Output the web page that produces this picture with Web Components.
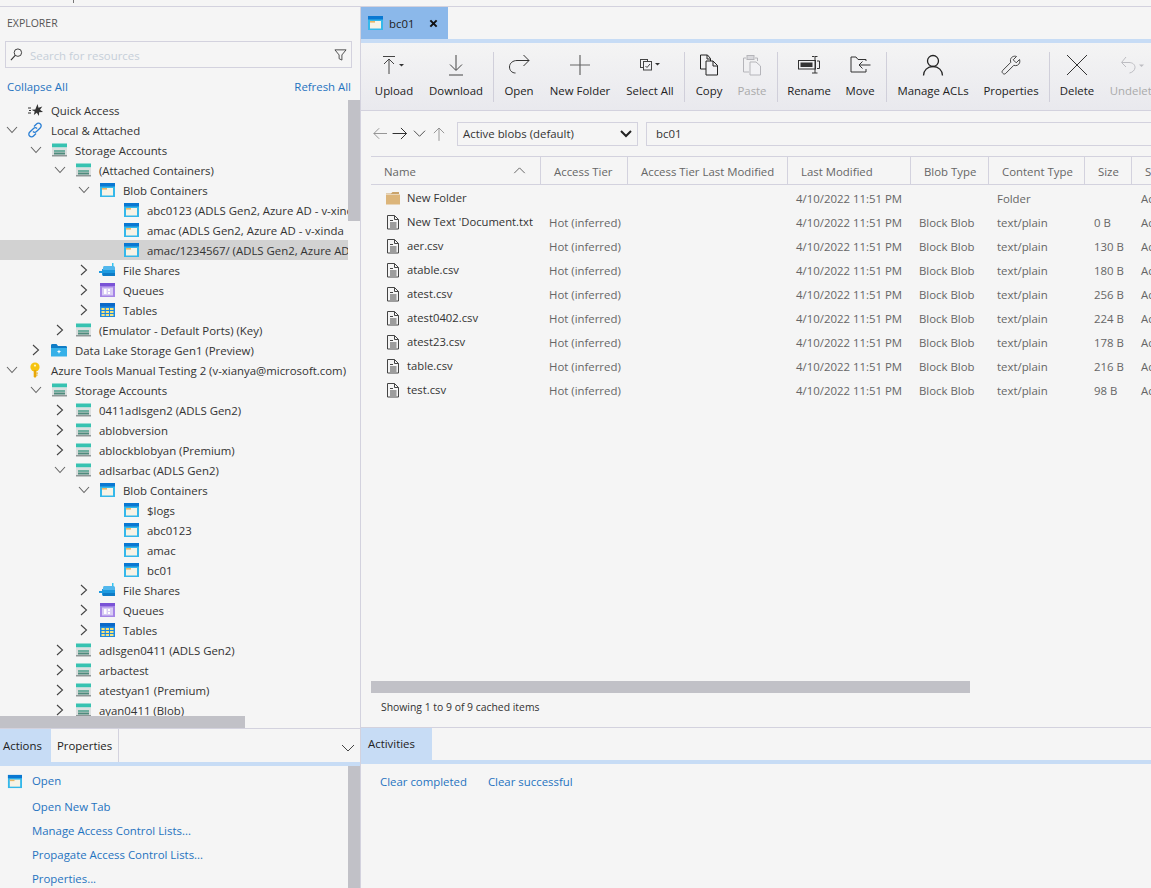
<!DOCTYPE html>
<html>
<head>
<meta charset="utf-8">
<title>Storage Explorer</title>
<style>
  html, body { margin: 0; height: 100%; overflow: hidden; background: #f5f5f5; }
  body { font: 11.4px/16px "Open Sans", "Noto Sans", sans-serif; color: #333; --link: #1f73c0; --line: #d3d2de; --stripe: #c7dcf5; --thumb: #c1c1c7; }
</style>
</head>
<body>
<sx-app></sx-app>
<script>
const ICONS = {
  quick: '<svg viewBox="0 0 16 16"><path d="M1 6h3M2 8.500h2M1 11h3" stroke="#333" fill="none"/><path d="M10.500 2l1 3.800 3.800-1.300-2.300 3.300 3 2.200-3.900.2-.1 3.800-2.200-3.200-3 2.200.9-3.600L4.500 7.700l3.800-.2z" fill="#333"/></svg>',
  link: '<svg viewBox="0 0 16 16" fill="none" stroke="#2a7fd4" stroke-width="1.3"><path d="M7 4.500l2.500-2.500a2.600 2.600 0 0 1 3.900 0 2.600 2.600 0 0 1 0 3.700L9.500 9.500a2.600 2.600 0 0 1-3.600 0"/><path d="M9 11.500L6.500 14a2.600 2.600 0 0 1-3.900 0 2.600 2.600 0 0 1 0-3.700L6.500 6.500a2.600 2.600 0 0 1 3.600 0"/></svg>',
  storage: '<svg viewBox="0 0 16 16"><rect x="1" y="1.500" width="15" height="4" fill="#37c2b1"/><rect x="1" y="5.500" width="15" height="8.500" fill="#dcdfdf"/><rect x="3" y="8" width="11" height="2" fill="#6fae9f"/><rect x="3" y="10.500" width="11" height="2" fill="#4e8a7c"/><rect x="1" y="13" width="15" height="1.500" fill="#8f9797"/></svg>',
  blob: '<svg viewBox="0 0 16 16"><rect x="1" y="1" width="15" height="14" fill="#35b8ea"/><rect x="1" y="1" width="15" height="3.500" fill="#0a78d2"/><rect x="3" y="6" width="11" height="7.500" fill="#f7f3e6"/><rect x="3" y="6" width="5" height="1.600" fill="#e9b765"/></svg>',
  files: '<svg viewBox="0 0 16 16"><path d="M0 9h3V7h13v6.500H3V11H0z" fill="#1d9ae0"/><path d="M4 5.500C4 4 5 4 6 4h8c1.200 0 2 .6 2 1.600V8H4z" fill="#52b7ec"/><path d="M13 1h1.500v3H13z" fill="#35c6f0"/><path d="M4 11h12v3H4z" fill="#0f7cc6"/></svg>',
  queue: '<svg viewBox="0 0 16 16"><rect x="1" y="1" width="15" height="14" fill="#a585e6"/><rect x="1" y="1" width="15" height="3" fill="#7a53d6"/><rect x="3" y="5.500" width="11" height="8" fill="#d8ccf4"/><path d="M5 7h2.500v5H5zM9 7h2v2H9zM9 10h2v2H9z" fill="#fff"/></svg>',
  table: '<svg viewBox="0 0 16 16"><rect x="1" y="1" width="15" height="14" fill="#1d8ae0"/><rect x="1" y="1" width="15" height="3.500" fill="#0a68c8"/><path d="M2.500 6h3.200v2H2.500zM6.800 6h3.200v2H6.800zM11 6h3.500v2H11zM2.500 9h3.200v2H2.500zM6.800 9h3.200v2H6.800zM11 9h3.500v2H11zM2.500 12h3.200v2H2.500zM6.800 12h3.200v2H6.800zM11 12h3.500v2H11z" fill="#f6e27a"/></svg>',
  lake: '<svg viewBox="0 0 16 16"><path d="M0 3.500C0 2.500.5 2 1.500 2h4L7 4h7.500c1 0 1.500.5 1.500 1.500V14H0z" fill="#0f7cc6"/><path d="M0 6h16v8.500H0z" fill="#35b0e8"/><path d="M8 7.500l.6 1.600 1.600.6-1.600.6L8 12l-.6-1.700-1.600-.6 1.600-.6z" fill="#fff"/></svg>',
  key: '<svg viewBox="0 0 16 16"><circle cx="8" cy="5" r="4.600" fill="#f6c40f"/><circle cx="8" cy="3.600" r="1.100" fill="#fff5c2"/><path d="M6.700 8h2.600v6.500L8 16l-1.300-1.500z" fill="#e8a80a"/><path d="M9.300 10.500h1.500v1.200H9.300zM9.300 12.600h1.200v1.100H9.300z" fill="#e8a80a"/></svg>',
  folder: '<svg viewBox="0 0 16 16"><path d="M1 3.500h5L7.500 2H14v2H1z" fill="#c9a36a"/><path d="M1 4.500h14v10H1z" fill="#dcb57a"/></svg>',
  doc: '<svg viewBox="0 0 16 16" fill="none" stroke="#444"><path d="M2.500 1.500h7l4 4v9.500h-11z"/><path d="M9.500 1.500v4h4M5 6.500h3M5 9h6.500M5 11h6.500M5 13h6.500"/></svg>',
  search: '<svg viewBox="0 0 14 14" fill="none" stroke="#333"><circle cx="8.500" cy="5" r="4"/><path d="M5.600 8L1 13" stroke-width="1.200"/></svg>',
  funnel: '<svg viewBox="0 0 14 14" fill="none" stroke="#444"><path d="M1 2h12L8.500 7.500V13l-3-1.500v-4z"/></svg>',
  upload: '<svg viewBox="0 0 22 18" fill="none" stroke="#444"><path d="M0 .5h12M6 3v15M1 8l5-5 5 5"/><path d="M16 8h5l-2.500 2.500z" fill="#333" stroke="none"/></svg>',
  download: '<svg viewBox="0 0 18 22" fill="none" stroke="#444"><path d="M9 1v15M3 10.500l6 6 6-6M2 21h14"/></svg>',
  open: '<svg viewBox="0 0 22 22" fill="none" stroke="#333"><path d="M21 6.500H9C5 6.500 1.500 9 1.500 13c0 3.500 2.500 6 6 6"/><path d="M15.500 1l5.500 5.500-5.500 5.500"/></svg>',
  plus: '<svg viewBox="0 0 22 22" fill="none" stroke="#666" stroke-width="1.200"><path d="M11 1v20M1 11h20"/></svg>',
  selectall: '<svg viewBox="0 0 22 14" fill="none" stroke="#444"><rect x="1.500" y="1.500" width="7" height="8"/><rect x="4.500" y="3.500" width="8" height="8.500" fill="#f0f0f3"/><path d="M6.500 8l1.500 1.500 3-3.500"/><path d="M16 5h5l-2.500 2.500z" fill="#333" stroke="none"/></svg>',
  copy: '<svg viewBox="0 0 20 22" fill="none" stroke="#222"><path d="M1.500 1h7l3 3.500V15h-10z"/><path d="M8 1v4h3.500"/><path d="M7 7h7l4.500 4.500V21H7z" fill="#f2f2f5"/><path d="M14 7v5h4.500"/></svg>',
  paste: '<svg viewBox="0 0 20 22" fill="none" stroke="#b5b5ba"><path d="M4 4H1.500v14H7M13 4h2.500v3"/><rect x="5" y="1.500" width="7" height="4" fill="#d9d9dd"/><path d="M8 8h6l4.500 4V21H8z" fill="#f2f2f5"/></svg>',
  rename: '<svg viewBox="0 0 22 18" fill="none" stroke="#333"><rect x=".5" y="4.500" width="17" height="8.500"/><rect x="2.500" y="6.500" width="12" height="4.500" fill="#333" stroke="none"/><path d="M14 .5h2.500M19.500 .5H17v16.500h2.500M14 17h3"/><path d="M19 5h2.500v7.500H19"/></svg>',
  move: '<svg viewBox="0 0 21 18" fill="none" stroke="#333"><path d="M16 5V3.500H8L6 1H1v15h15v-3"/><path d="M20.500 9H9M12.500 5.500L9 9l3.500 3.500"/></svg>',
  person: '<svg viewBox="0 0 22 22" fill="none" stroke="#222" stroke-width="1.300"><circle cx="11" cy="7" r="5.500"/><path d="M1.500 21.500c0-5 4-9 9.500-9s9.500 4 9.500 9"/></svg>',
  wrench: '<svg viewBox="0 0 20 20" fill="none" stroke="#444"><path d="M18.500 4.500l-3.300 3.300-3-3L15.500 1.500c-2.500-1-5.500.5-6 3-.2 1 0 2 .3 2.800L1.800 15.300c-1 1-1 2 0 3s2 1 3 0l8-8c2.500 1 5-.2 5.800-2.500.3-1 .3-2 0-3.300z"/></svg>',
  del: '<svg viewBox="0 0 22 22" fill="none" stroke="#333"><path d="M1 1l20 20M21 1L1 21"/></svg>',
  undo: '<svg viewBox="0 0 28 18" fill="none" stroke="#bdbdc2"><path d="M2 6.500h7c3.500 0 6 2 6 5 0 2.500-2.500 5-5.500 5.500"/><path d="M6 1L1.500 6.500 6 11"/><path d="M19 8.500h5L21.500 11z" fill="#bdbdc2" stroke="none"/></svg>',
  back: '<svg viewBox="0 0 16 14" fill="none" stroke="#888"><path d="M16 7H1M7 1L1 7l6 6"/></svg>',
  fwd: '<svg viewBox="0 0 16 14" fill="none" stroke="#222"><path d="M0 7h15M9 1l6 6-6 6"/></svg>',
  drop: '<svg viewBox="0 0 14 14" fill="none" stroke="#444"><path d="M1 4l6 6 6-6"/></svg>',
  up: '<svg viewBox="0 0 14 16" fill="none" stroke="#888"><path d="M7 16V1M1 7l6-6 6 6"/></svg>',
  sortup: '<svg viewBox="0 0 14 8" fill="none" stroke="#555"><path d="M1 7l6-6 6 6"/></svg>',
  closed: '<svg viewBox="0 0 8 12" fill="none" stroke="#444" stroke-width="1.100"><path d="M1 1l5.500 5L1 11"/></svg>',
  opened: '<svg viewBox="0 0 12 8" fill="none" stroke="#666" stroke-width="1.100"><path d="M1 1l5 5.500L11 1"/></svg>',
  close: '<svg viewBox="0 0 10 10" fill="none" stroke="#111" stroke-width="2.200"><path d="M1.500 1.500l7 7M8.500 1.500l-7 7"/></svg>'
};

class SxIcon extends HTMLElement {
  connectedCallback() {
    const w = this.getAttribute('w') || 16, h = this.getAttribute('h') || w;
    this.attachShadow({ mode: 'open' }).innerHTML = `
      <style>
        :host { display: inline-flex; flex: none; width: ${w}px; height: ${h}px; }
        svg { width: 100%; height: 100%; display: block; }
      </style>${ICONS[this.getAttribute('name')] || ''}`;
  }
}
customElements.define('sx-icon', SxIcon);

class SxTreeRow extends HTMLElement {
  connectedCallback() {
    const level = +this.getAttribute('level') || 0;
    const state = this.getAttribute('state');
    const chev = state === 'open' ? '<sx-icon name="opened" w="12" h="8"></sx-icon>'
      : state === 'closed' ? '<sx-icon name="closed" w="8" h="12"></sx-icon>' : '';
    this.attachShadow({ mode: 'open' }).innerHTML = `
      <style>
        :host { display: flex; align-items: center; height: 20px; padding-left: ${level * 24}px; white-space: nowrap; color: #333; }
        :host([selected]) { background: #d2d2d2; }
        .chev { width: 24px; display: flex; justify-content: center; flex: none; }
        .ico { width: 27px; flex: none; padding-left: 3px; box-sizing: border-box; display: flex; }
        .t { padding-top: 2px; }
      </style>
      <span class="chev">${chev}</span>
      <span class="ico"><sx-icon name="${this.getAttribute('icon')}"></sx-icon></span>
      <span class="t"><slot></slot></span>`;
  }
}
customElements.define('sx-tree-row', SxTreeRow);

class SxExplorer extends HTMLElement {
  connectedCallback() {
    const rows = [
      [0, '', 'quick', 'Quick Access'],
      [0, 'open', 'link', 'Local &amp; Attached'],
      [1, 'open', 'storage', 'Storage Accounts'],
      [2, 'open', 'storage', '(Attached Containers)'],
      [3, 'open', 'blob', 'Blob Containers'],
      [4, '', 'blob', 'abc0123 (ADLS Gen2, Azure AD - v-xinda'],
      [4, '', 'blob', 'amac (ADLS Gen2, Azure AD - v-xinda'],
      [4, '', 'blob', 'amac/1234567/ (ADLS Gen2, Azure AD', 1],
      [3, 'closed', 'files', 'File Shares'],
      [3, 'closed', 'queue', 'Queues'],
      [3, 'closed', 'table', 'Tables'],
      [2, 'closed', 'storage', '(Emulator - Default Ports) (Key)'],
      [1, 'closed', 'lake', 'Data Lake Storage Gen1 (Preview)'],
      [0, 'open', 'key', 'Azure Tools Manual Testing 2 (v-xianya@microsoft.com)'],
      [1, 'open', 'storage', 'Storage Accounts'],
      [2, 'closed', 'storage', '0411adlsgen2 (ADLS Gen2)'],
      [2, 'closed', 'storage', 'ablobversion'],
      [2, 'closed', 'storage', 'ablockblobyan (Premium)'],
      [2, 'open', 'storage', 'adlsarbac (ADLS Gen2)'],
      [3, 'open', 'blob', 'Blob Containers'],
      [4, '', 'blob', '$logs'],
      [4, '', 'blob', 'abc0123'],
      [4, '', 'blob', 'amac'],
      [4, '', 'blob', 'bc01'],
      [3, 'closed', 'files', 'File Shares'],
      [3, 'closed', 'queue', 'Queues'],
      [3, 'closed', 'table', 'Tables'],
      [2, 'closed', 'storage', 'adlsgen0411 (ADLS Gen2)'],
      [2, 'closed', 'storage', 'arbactest'],
      [2, 'closed', 'storage', 'atestyan1 (Premium)'],
      [2, 'closed', 'storage', 'ayan0411 (Blob)']
    ];
    this.attachShadow({ mode: 'open' }).innerHTML = `
      <style>
        :host { display: flex; flex-direction: column; height: 100%; }
        .title { height: 34px; box-sizing: border-box; padding: 8px 0 0 7px; font-size: 10.5px; color: #555; }
        .search { height: 27px; margin: 0 8px 0 5px; box-sizing: border-box; border: 1px solid var(--line); display: flex; align-items: center; padding: 0 4px; }
        .search span { flex: 1; color: #c6cfd9; padding: 2px 0 0 7px; }
        .links { height: 32px; box-sizing: border-box; padding: 11px 9px 0 7px; display: flex; justify-content: space-between; color: var(--link); }
        .tree { flex: 1; min-height: 0; position: relative; overflow: hidden; }
        .rows { width: 348px; overflow: hidden; height: 616px; }
        .vthumb { position: absolute; right: 0; top: 0; width: 12px; height: 121px; background: var(--thumb); }
        .hthumb { position: absolute; left: 0; bottom: 0; width: 245px; height: 12px; background: var(--thumb); }
      </style>
      <div class="title">EXPLORER</div>
      <div class="search"><sx-icon name="search" w="13" h="13"></sx-icon><span>Search for resources</span><sx-icon name="funnel" w="13" h="13"></sx-icon></div>
      <div class="links"><span>Collapse All</span><span>Refresh All</span></div>
      <div class="tree">
        <div class="rows">${rows.map(r => `<sx-tree-row level="${r[0]}" state="${r[1]}" icon="${r[2]}"${r[4] ? ' selected' : ''}>${r[3]}</sx-tree-row>`).join('')}</div>
        <div class="vthumb"></div>
        <div class="hthumb"></div>
      </div>`;
  }
}
customElements.define('sx-explorer', SxExplorer);

class SxPanelTabs extends HTMLElement {
  connectedCallback() {
    this.attachShadow({ mode: 'open' }).innerHTML = `
      <style>
        :host { display: block; border-top: 1px solid var(--line); border-bottom: 4px solid var(--stripe); height: var(--tabs-h, 33px); position: relative; }
        .tabs { display: flex; height: 100%; }
        ::slotted(*) { display: flex; align-items: center; box-sizing: border-box; color: #222; }
        ::slotted([active]) { background: var(--stripe); }
        ::slotted(.plain) { border-right: 1px solid var(--line); }
        .end { margin-left: auto; padding: 12px 5px 0 0; }
      </style>
      <div class="tabs"><slot></slot><div class="end"><slot name="end"></slot></div></div>`;
  }
}
customElements.define('sx-panel-tabs', SxPanelTabs);

class SxActions extends HTMLElement {
  connectedCallback() {
    const items = ['Open New Tab', 'Manage Access Control Lists...', 'Propagate Access Control Lists...', 'Properties...'];
    this.attachShadow({ mode: 'open' }).innerHTML = `
      <style>
        :host { display: block; height: 122px; overflow: hidden; position: relative; color: var(--link); padding-top: 3px; box-sizing: border-box; }
        .row { height: 24px; display: flex; align-items: center; padding-left: 32px; }
        .first { padding-left: 7px; margin-bottom: 2px; gap: 10px; }
        .thumb { position: absolute; right: 0; top: 0; bottom: 0; width: 12px; background: var(--thumb); }
      </style>
      <div class="row first"><sx-icon name="blob" w="15" h="15"></sx-icon><span>Open</span></div>
      ${items.map(t => `<div class="row">${t}</div>`).join('')}
      <div class="thumb"></div>`;
  }
}
customElements.define('sx-actions', SxActions);

class SxToolButton extends HTMLElement {
  connectedCallback() {
    const w = this.getAttribute('w');
    this.attachShadow({ mode: 'open' }).innerHTML = `
      <style>
        :host { display: flex; flex-direction: column; align-items: center; flex: none; width: ${w}px; color: #222; }
        :host([disabled]) { color: #aaa; }
        .ico { height: 26px; display: flex; align-items: center; justify-content: center; }
        .lbl { white-space: nowrap; padding-top: 5px; }
      </style>
      <div class="ico"><sx-icon name="${this.getAttribute('icon')}" w="${this.getAttribute('iw')}" h="${this.getAttribute('ih')}"></sx-icon></div>
      <div class="lbl"><slot></slot></div>`;
  }
}
customElements.define('sx-tool-button', SxToolButton);

class SxToolbar extends HTMLElement {
  connectedCallback() {
    this.attachShadow({ mode: 'open' }).innerHTML = `
      <style>
        :host { display: flex; height: 68px; box-sizing: border-box; padding: 9px 0 0 5px; overflow: hidden; border-bottom: 1px solid var(--line); background: linear-gradient(#f4f4f4, #e9e9ee); }
        ::slotted(hr) { flex: none; width: 1px; height: 50px; margin: 0 3px; border: 0; background: #d0cfda; }
      </style>
      <slot></slot>`;
  }
}
customElements.define('sx-toolbar', SxToolbar);

class SxBlobTable extends HTMLElement {
  connectedCallback() {
    const cols = [169, 87, 160, 123, 78, 96, 47, 30];
    const heads = ['Name', 'Access Tier', 'Access Tier Last Modified', 'Last Modified', 'Blob Type', 'Content Type', 'Size', 'S'];
    const files = [
      ['folder', 'New Folder', '', '', 'Folder', ''],
      ['doc', "New Text 'Document.txt", 'Hot (inferred)', 'Block Blob', 'text/plain', '0 B'],
      ['doc', 'aer.csv', 'Hot (inferred)', 'Block Blob', 'text/plain', '130 B'],
      ['doc', 'atable.csv', 'Hot (inferred)', 'Block Blob', 'text/plain', '180 B'],
      ['doc', 'atest.csv', 'Hot (inferred)', 'Block Blob', 'text/plain', '256 B'],
      ['doc', 'atest0402.csv', 'Hot (inferred)', 'Block Blob', 'text/plain', '224 B'],
      ['doc', 'atest23.csv', 'Hot (inferred)', 'Block Blob', 'text/plain', '178 B'],
      ['doc', 'table.csv', 'Hot (inferred)', 'Block Blob', 'text/plain', '216 B'],
      ['doc', 'test.csv', 'Hot (inferred)', 'Block Blob', 'text/plain', '98 B']
    ];
    const tpl = cols.map(c => c + 'px').join(' ');
    this.attachShadow({ mode: 'open' }).innerHTML = `
      <style>
        :host { display: block; position: relative; flex: 1; min-height: 0; overflow: hidden; margin-left: 10px; }
        .row { display: grid; grid-template-columns: ${tpl}; height: 24px; color: #666; white-space: nowrap; align-items: center; }
        .head { border-top: 1px solid var(--line); border-bottom: 1px solid var(--line); margin-bottom: 1px; height: 27px; }
        .head div { padding-left: 13px; height: 100%; display: flex; align-items: center; border-left: 1px solid var(--line); box-sizing: border-box; justify-content: space-between; }
        .head span { padding-top: 2px; }
        .head div:first-child { border-left: 0; padding-right: 14px; }
        .cell { padding-left: 9px; padding-top: 1px; }
        .name { display: flex; align-items: center; padding-left: 14px; color: #333; gap: 6px; font-size: 11.25px; }
        .size { padding-left: 10px; }
        .hthumb { position: absolute; left: 0; top: 525px; width: 599px; height: 12px; background: var(--thumb); }
        .status { position: absolute; left: 10px; top: 543px; color: #333; font-size: 10.4px; }
      </style>
      <div class="row head">${heads.map((h, i) => `<div><span>${h}</span>${i === 0 ? '<sx-icon name="sortup" w="13" h="7"></sx-icon>' : ''}</div>`).join('')}</div>
      ${files.map(f => `<div class="row">
        <div class="name"><sx-icon name="${f[0]}" w="16" h="16"></sx-icon><span>${f[1]}</span></div>
        <div class="cell">${f[2]}</div><div class="cell"></div>
        <div class="cell">4/10/2022 11:51 PM</div>
        <div class="cell">${f[3]}</div><div class="cell">${f[4]}</div>
        <div class="cell size">${f[5]}</div><div class="cell size">Ac</div></div>`).join('')}
      <div class="hthumb"></div>
      <div class="status">Showing 1 to 9 of 9 cached items</div>`;
  }
}
customElements.define('sx-blob-table', SxBlobTable);

class SxNavRow extends HTMLElement {
  connectedCallback() {
    this.attachShadow({ mode: 'open' }).innerHTML = `
      <style>
        :host { display: flex; align-items: center; height: 45px; padding: 0 0 0 12px; box-sizing: border-box; flex: none; white-space: nowrap; color: #333; }
        .arrows { display: flex; align-items: center; gap: 5px; width: 84px; flex: none; }
        .box { height: 24px; box-sizing: border-box; border: 1px solid var(--line); display: flex; align-items: center; padding: 1px 5px 0; }
        .sel { width: 181px; justify-content: space-between; margin-right: 8px; flex: none; }
        .path { flex: 1; padding-left: 9px; border-right: 0; }
        .up { margin-left: 2px; }
      </style>
      <div class="arrows"><sx-icon name="back" w="14" h="13"></sx-icon><sx-icon name="fwd" w="16" h="13"></sx-icon><sx-icon name="drop" w="13" h="13"></sx-icon><sx-icon class="up" name="up" w="12" h="14"></sx-icon></div>
      <div class="box sel"><span>Active blobs (default)</span><svg width="12" height="8" viewBox="0 0 12 8" fill="none" stroke="#222" stroke-width="2"><path d="M1 1l5 5 5-5"/></svg></div>
      <div class="box path">bc01</div>`;
  }
}
customElements.define('sx-nav-row', SxNavRow);

class SxApp extends HTMLElement {
  connectedCallback() {
    this.attachShadow({ mode: 'open' }).innerHTML = `
      <style>
        :host { display: flex; flex-direction: column; height: 100vh; width: 100vw; overflow: hidden; }
        .menu { height: 6px; border-bottom: 1px solid var(--line); flex: none; position: relative; }
        .menu i { position: absolute; left: 73px; top: 0; width: 1px; height: 3px; background: #777; }
        .main { flex: 1; min-height: 0; display: flex; }
        .left { width: 360px; flex: none; display: flex; flex-direction: column; border-right: 1px solid var(--line); }
        .left-top { flex: 1; min-height: 0; }
        .right { flex: 1; min-width: 0; display: flex; flex-direction: column; }
        .doc-tabs { height: 32px; border-bottom: 4px solid var(--stripe); display: flex; flex: none; }
        .doc-tab { width: 87px; background: #8bb8ea; display: flex; align-items: center; box-sizing: border-box; padding-left: 6px; gap: 6px; color: #222; }
        .doc-tab span { padding-top: 2px; width: 34px; }
        .a { width: 51px; padding-left: 3px; }
        .p { width: 68px; padding-left: 6px; }
        .act { width: 71px; padding-left: 7px; }
        .clear { height: 124px; box-sizing: border-box; padding: 10px 0 0 19px; display: flex; gap: 21px; color: var(--link); }
        .bottom { --tabs-h: 32px; }
      </style>
      <div class="menu"><i></i></div>
      <div class="main">
        <div class="left">
          <div class="left-top"><sx-explorer></sx-explorer></div>
          <sx-panel-tabs style="flex:none">
            <div class="a" active>Actions</div>
            <div class="p plain">Properties</div>
            <sx-icon slot="end" name="drop" w="14" h="14"></sx-icon>
          </sx-panel-tabs>
          <sx-actions style="flex:none"></sx-actions>
        </div>
        <div class="right">
          <div class="doc-tabs"><div class="doc-tab"><sx-icon name="blob" w="16" h="16"></sx-icon><span>bc01</span><sx-icon name="close" w="9" h="9"></sx-icon></div></div>
          <sx-toolbar style="flex:none">
            <sx-tool-button w="56" icon="upload" iw="22" ih="18">Upload</sx-tool-button>
            <sx-tool-button w="68" icon="download" iw="18" ih="22">Download</sx-tool-button>
            <hr>
            <sx-tool-button w="44" icon="open" iw="22" ih="22">Open</sx-tool-button>
            <sx-tool-button w="78" icon="plus" iw="22" ih="22">New Folder</sx-tool-button>
            <sx-tool-button w="62" icon="selectall" iw="22" ih="14">Select All</sx-tool-button>
            <hr>
            <sx-tool-button w="42" icon="copy" iw="20" ih="22">Copy</sx-tool-button>
            <sx-tool-button w="44" icon="paste" iw="20" ih="22" disabled>Paste</sx-tool-button>
            <hr>
            <sx-tool-button w="56" icon="rename" iw="22" ih="18">Rename</sx-tool-button>
            <sx-tool-button w="46" icon="move" iw="21" ih="18">Move</sx-tool-button>
            <hr>
            <sx-tool-button w="86" icon="person" iw="22" ih="22">Manage ACLs</sx-tool-button>
            <sx-tool-button w="70" icon="wrench" iw="20" ih="20">Properties</sx-tool-button>
            <hr>
            <sx-tool-button w="48" icon="del" iw="22" ih="22">Delete</sx-tool-button>
            <sx-tool-button w="66" icon="undo" iw="28" ih="18" disabled>Undelete</sx-tool-button>
          </sx-toolbar>
          <sx-nav-row></sx-nav-row>
          <sx-blob-table></sx-blob-table>
          <sx-panel-tabs class="bottom" style="flex:none"><div class="act" active>Activities</div></sx-panel-tabs>
          <div class="clear"><span>Clear completed</span><span>Clear successful</span></div>
        </div>
      </div>`;
  }
}
customElements.define('sx-app', SxApp);
</script>
</body>
</html>
